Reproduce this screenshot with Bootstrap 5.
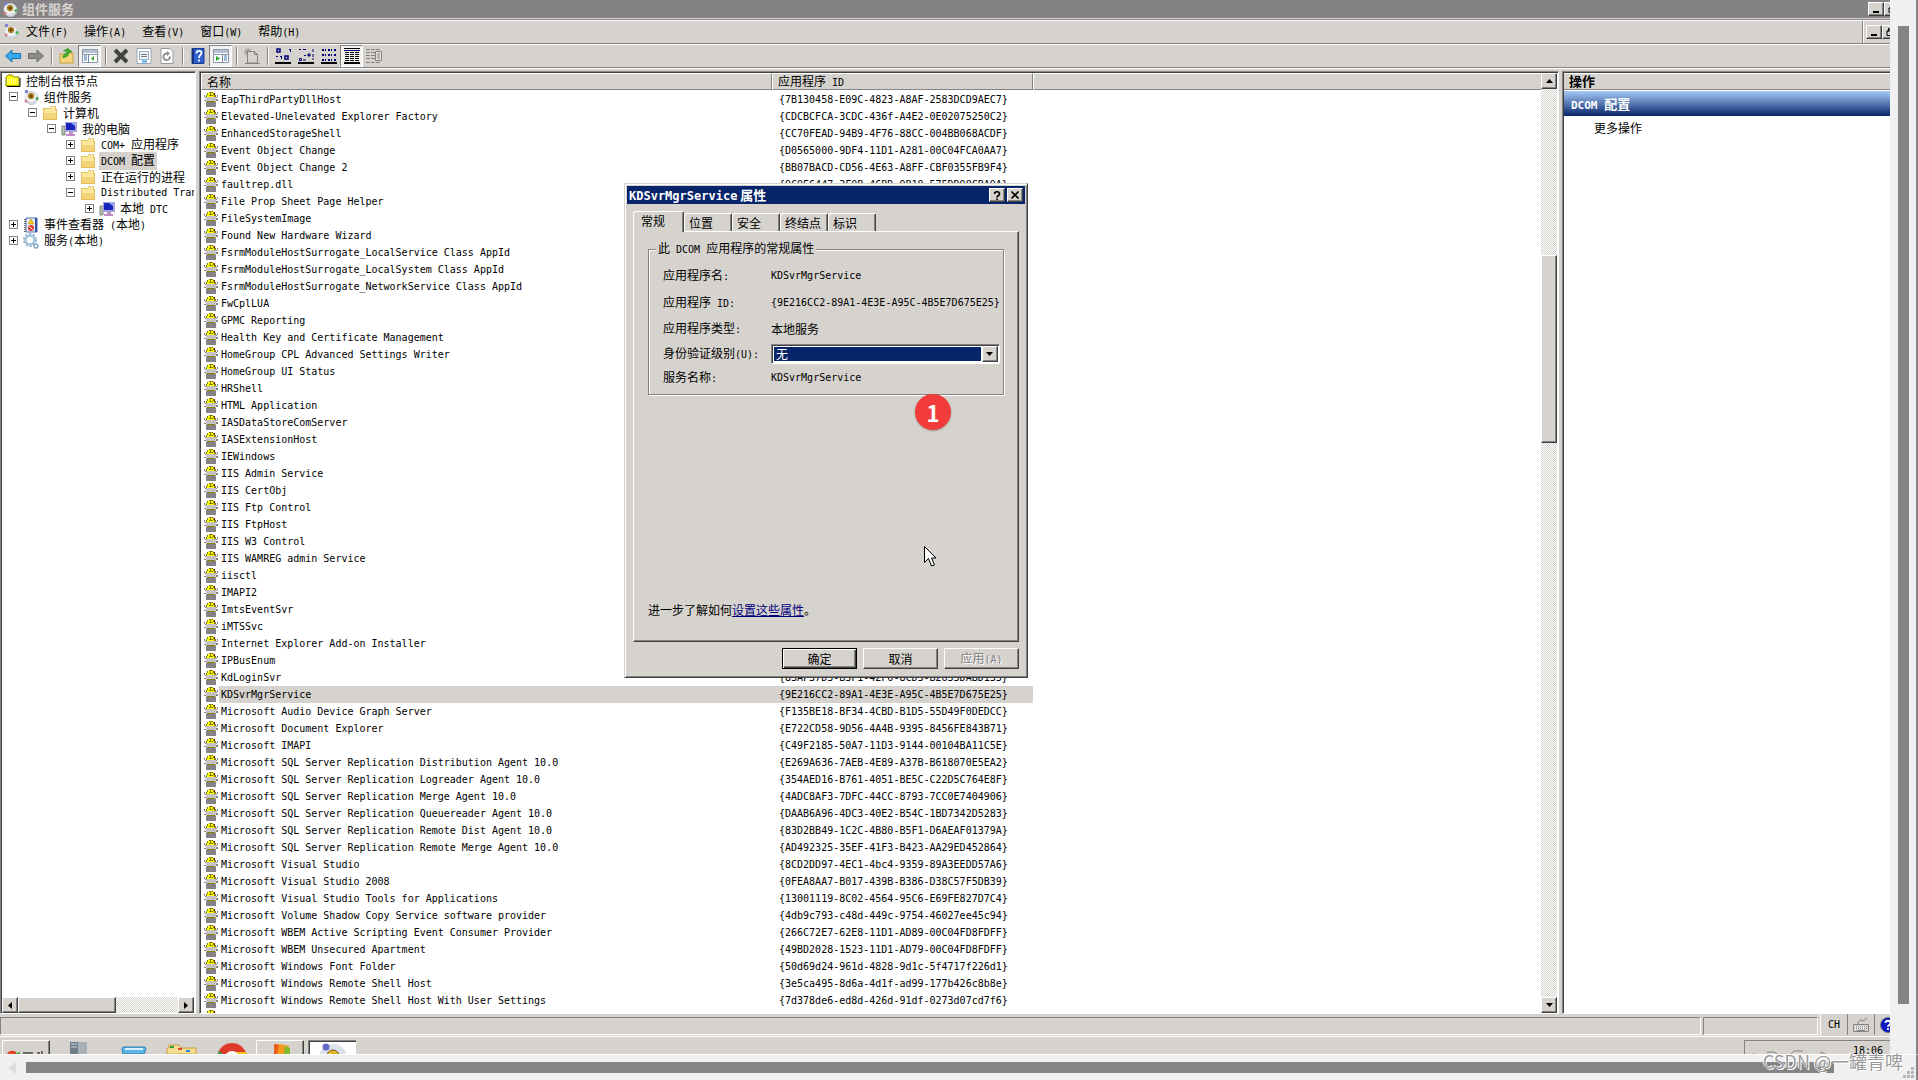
<!DOCTYPE html>
<html lang="zh-CN">
<head>
<meta charset="utf-8">
<meta name="viewport" content="width=device-width, initial-scale=1">
<title>组件服务</title>
<link href="https://cdn.jsdelivr.net/npm/bootstrap@5.3.0/dist/css/bootstrap.min.css" rel="stylesheet">
<style>
:root{--face:#d6d3ce;--shade:#848284;--dark:#424142;--navy:#08246b}
body{font:12px/16px "Noto Sans CJK SC",sans-serif;color:#000;background:var(--face);overflow:hidden}
button,select{font:inherit;color:inherit;padding:0;border-radius:0}
.en{font-family:"DejaVu Sans Mono",monospace;font-size:10px}
.screen{height:100vh}
.face{background:var(--face)}
.raised{background:var(--face);border:1px solid;border-color:#fff var(--dark) var(--dark) #fff;box-shadow:inset -1px -1px var(--shade)}
.dither{background:repeating-conic-gradient(#fff 0 25%,var(--face) 0 50%) 0 0/2px 2px}
.mini{width:16px;height:14px;display:flex;align-items:center;justify-content:center}
svg{display:block;flex:none}
/* window chrome */
.caption-bar{height:18px;background:var(--shade);color:var(--face);font-weight:700;font-size:13px;line-height:18px;padding-left:2px}
.menu-row{height:26px;border-top:1px solid var(--face);border-bottom:1px solid var(--shade);box-shadow:inset 0 1px var(--shade),inset 0 2px #fff;padding-left:3px}
.menu-row a{color:#000;text-decoration:none}
.menu-links{gap:16px;padding-left:7px;padding-top:2px}
.mdi{width:28px;border-left:1px solid var(--shade);box-shadow:inset 1px 0 #fff;margin-top:2px;padding:4px 0 0 3px;overflow:hidden}
.tool-row{height:25px;border-top:1px solid #fff;border-bottom:1px solid #fff;box-shadow:inset 0 -1px var(--shade);padding:0 0 1px 1px}
.tool-row button{width:23px;height:22px;border:1px solid transparent;background:none;display:flex;align-items:center;justify-content:center}
.tool-row button.on{border-color:var(--shade) #fff #fff var(--shade);background:repeating-conic-gradient(#fff 0 25%,#e6e4e0 0 50%) 0 0/2px 2px}
.sep{width:8px;height:18px;background:linear-gradient(90deg,var(--shade) 1px,#fff 1px 2px,transparent 2px) 4px 0 no-repeat}
/* panes */
.panes{gap:3px;padding-top:2px}
.pane{background:#fff;border:solid;border-width:1px;border-color:var(--shade) #fff #fff var(--shade);box-shadow:inset 1px 1px var(--dark);padding:1px 1px 0 1px}
.pane-tree{width:196px}
.pane-act{width:328px;border-right:0;padding-right:0}
.tree-list{line-height:16px}
.tree-list li{display:flex;align-items:center;height:16px;gap:5px;white-space:nowrap}
.tree-list li>span{padding:0 2px;margin-left:-2px}
.tree-list .picked{background:var(--face)}
.tw{width:9px;height:9px;border:1px solid var(--shade);background:linear-gradient(#000,#000) 1px 3px/5px 1px no-repeat;flex:none}
.tw.plus{background:linear-gradient(#000,#000) 1px 3px/5px 1px no-repeat,linear-gradient(#000,#000) 3px 1px/1px 5px no-repeat}
.lr{padding-left:3px}.l0{padding-left:7px}.l1{padding-left:26px}.l2{padding-left:45px}.l3{padding-left:64px}.l4{padding-left:83px}
.hbar{height:16px}
.h-thumb{width:98px}
.sb{width:16px;height:16px;display:flex;align-items:center;justify-content:center;flex:none}
.grid-apps{width:100%;table-layout:fixed;border-collapse:separate;border-spacing:0}
.grid-apps th{height:15px;font-weight:400;line-height:13px;background:var(--face);border-bottom:1px solid var(--shade);border-top:1px solid #fff;border-right:1px solid var(--shade);border-left:1px solid #fff;padding:0 0 0 5px}
.grid-apps tbody:before{content:"";display:block;height:1px}
.grid-apps td{height:17px;padding:0;line-height:17px;white-space:nowrap}
.grid-apps td:nth-child(2){padding-left:7px}
.app-name{display:flex;align-items:center;padding-left:3px}
.app-name span{flex:1;padding-left:2px;margin-left:1px}
.chosen td:nth-child(2),.chosen .app-name span{background:var(--face)}
.act-head{height:17px;border-top:1px solid #fff;border-bottom:1px solid var(--shade);font-size:13px;font-weight:700;line-height:14px;padding-left:5px}
.act-band{height:25px;margin-top:1px;background:linear-gradient(#a5cbf7,var(--navy));color:#fff;font-weight:700;font-size:13px;line-height:25px;padding-left:7px}
.act-band .en{font-size:11px}
.act-item{padding:4px 0 0 30px;color:#000;text-decoration:none;display:block}
/* bottom bars */
.status-row{height:22px;gap:2px}
.cell{border:1px solid;border-color:var(--shade) #fff #fff var(--shade);height:18px;margin-top:3px}
.cell-b{width:115px}
.lang{width:70px;border-left:1px solid #fff}
.lang>*{height:21px;border-right:1px solid var(--shade);display:flex;align-items:center;justify-content:center;flex:none;width:27px}
.task-row{height:18px;border-top:1px solid #fff;padding-left:2px;overflow:hidden}
.task-row button{width:48px;height:30px;margin-top:3px;flex:none;overflow:hidden;display:flex;align-items:flex-start}
.task-row .task-on{background:#fff;border:0;box-shadow:inset 1px 1px var(--shade),inset 2px 2px var(--dark)}
.tray{width:146px;border:1px solid var(--shade);border-right:0;margin-top:3px;height:30px}
.host-v{width:28px;background:#f0f0f0;border-right:2px solid #848484;padding:26px 0 50px 8px}
.host-v div,.host-h .bar{background:#848484}
.host-v div{width:11px}
.host-h{height:26px;background:#f0f0f0;border-right:2px solid #848484;padding-left:8px;border-top:1px solid #fff}
.host-h .bar{height:11px;margin:0 82px 0 10px}
.credit{right:15px;bottom:7px;font-size:18px;line-height:24px;color:#9a9a9a;text-shadow:1px 1px #fff,-1px -1px #fff}
/* dialog */
.dlg{left:624px;top:183px;width:404px;background:var(--face);border:1px solid;border-color:var(--face) var(--dark) var(--dark) var(--face);box-shadow:inset 1px 1px #fff,inset -1px -1px var(--shade);padding:2px}
.dlg-title{height:18px;background:var(--navy);color:#fff;font-weight:700;font-size:13px;padding:0 2px;gap:2px}
.dlg-title .en{font-size:12px;line-height:12px}
.dlg-body{padding:7px 6px 6px}
.tabs button{border:1px solid;border-color:#fff var(--dark) transparent #fff;border-bottom:0;border-radius:3px 2px 0 0;box-shadow:inset -1px 0 var(--shade);background:var(--face);width:48px;height:18px;text-align:left;padding-left:4px;line-height:16px}
.tabs button.now{height:21px;width:51px;padding:0 0 3px 7px;margin-bottom:-1px;position:relative}
.sheet{border:1px solid;border-color:#fff var(--dark) var(--dark) #fff;box-shadow:inset -1px -1px var(--shade);height:411px;padding:8px 14px 23px}
.box{border:1px solid var(--shade);box-shadow:inset 1px 1px #fff,1px 1px #fff;height:155px;padding:0 5px 0 14px}
.box legend{float:none;width:auto;font-size:12px;line-height:16px;margin:0 0 0 -7px;padding:0 2px;background:var(--face)}
.fields{display:grid;grid-template-columns:108px 1fr;grid-template-rows:27px 27px 25px 25px 24px;align-items:center;padding-top:4px;white-space:nowrap}
.combo{height:20px;border:1px solid;border-color:var(--shade) #fff #fff var(--shade);box-shadow:inset 1px 1px var(--dark);padding:1px;background:#fff}
.combo select{appearance:none;border:0;background:var(--navy);color:#fff;outline:1px solid #fff;outline-offset:-1px;padding-left:3px;line-height:14px}
.more a{color:#00007b}
.dlg-btns{gap:6px;padding-top:6px}
.dlg-btns button{width:75px;height:21px;line-height:17px}
.dlg-btns .def{outline:1px solid #000;outline-offset:-1px;border-color:#000;box-shadow:inset 1px 1px #fff,inset -1px -1px var(--dark),inset -2px -2px var(--shade)}
.dlg-btns :disabled{color:var(--shade);text-shadow:1px 1px #fff}
.step{left:915px;top:394px;width:36px;height:36px;background:#f23c3c;color:#fff;font:700 22px/36px "Noto Sans CJK SC",sans-serif;box-shadow:0 1px 2px #0004}
.ptr{left:924px;top:546px}
</style>
</head>
<body>
<svg width="0" height="0" class="position-absolute">
<defs>
<symbol id="com" viewBox="0 0 16 16"><circle cx="8.500" cy="9" r="6.500" fill="#d8dade" stroke="#c3c6cc"/><ellipse cx="8" cy="8" rx="6" ry="5" fill="#eef0f3"/><circle cx="8" cy="7" r="2.800" fill="#e7a812" stroke="#8a6410" stroke-width=".8"/><path d="M8 5v4M6 7h4" stroke="#3c2800"/><circle cx="3.500" cy="2.500" r="1.800" fill="#7d82d0"/><circle cx="14" cy="9.500" r="1.500" fill="#3fae49"/><circle cx="3" cy="12" r="1.500" fill="#dc7f86"/></symbol>
<symbol id="fold" viewBox="0 0 16 16"><path d="M1 3h7l1-2h5v3h1v11H1z" fill="#e5bd57"/><path d="M2 4h6l1-2h4v3h1v9H2z" fill="#fbe7a0"/><path d="M2 8h12v6H2z" fill="#f4d67d"/><path d="M11 2h2" stroke="#fff"/></symbol>
<symbol id="root" viewBox="0 0 16 16"><path d="M1 4l2-2h4l2 2h5v9H1z" fill="#ff0" stroke="#848200"/><path d="M2 6h11M2 8h11M2 10h11" stroke="#fff" stroke-dasharray="1 1"/><path d="M2 13.500h13V5" fill="none" stroke="#000"/></symbol>
<symbol id="pc" viewBox="0 0 16 16"><path d="M1 5h3v9H1z" fill="#b9c4b0" stroke="#7d8a78"/><path d="M4 1h12v10H4z" fill="#a9a2dd"/><path d="M5 2h9v7H5z" fill="#1824bb"/><path d="M10 2h4v3z" fill="#7fb8ff"/><path d="M8 11h4v2h2v2H5v-2h3z" fill="#bd8cc4"/></symbol>
<symbol id="evt" viewBox="0 0 16 16"><path d="M3 1h11v14H3z" fill="#e8edf8" stroke="#5472b4"/><path d="M12 1h2v14h-2z" fill="#2f54a4"/><path d="M2 2v13" stroke="#666" stroke-width="2" stroke-dasharray="1 1"/><path d="M8 2l3 5H5z" fill="#f7c81c" stroke="#b88b00" stroke-width=".5"/><circle cx="8" cy="11" r="3" fill="#da3d30"/><path d="M6.500 9.500l3 3" stroke="#fff"/></symbol>
<symbol id="gear" viewBox="0 0 16 16"><circle cx="7" cy="7" r="4.500" fill="none" stroke="#9fc2dc" stroke-width="2.500"/><circle cx="7" cy="7" r="6.300" fill="none" stroke="#8aaecb" stroke-width="1.500" stroke-dasharray="2 2"/><circle cx="13" cy="13" r="2" fill="none" stroke="#8aaecb" stroke-width="1.500"/></symbol>
<symbol id="app" viewBox="0 0 14 15"><path d="M2 6V3h1V1h2V0h4v1h2v2h1v3z" fill="#848200"/><path d="M3 5V3h1V1h5v2h1v2z" fill="#ff0"/><path d="M6 1h1v2h2v1H5V3h1z" fill="#848200"/><path d="M10 1h1v2h-1z" fill="#a01010"/><path d="M2 5h10v5H2z" fill="#c6c3c6"/><path d="M0 3h1v2H0zM13 3h1v2h-1zM1 5h1v1H1zM12 5h1v1h-1zM0 8h2v1H0zM12 7h2v2h-2z" fill="#848284"/><path d="M3 9h8v1H3z" fill="#848200"/><path d="M2 10h10v5H2z" fill="#848284"/></symbol>
<symbol id="min" viewBox="0 0 8 8"><path d="M1 6h6v2H1z"/></symbol>
<symbol id="rest" viewBox="0 0 8 8"><path d="M2.500 0v3M2 1h6M2.500 3H1v4.500h5V3H1" fill="none" stroke="#000"/></symbol>
<symbol id="up" viewBox="0 0 7 4"><path d="M0 4h7L3.500 0z"/></symbol>
<symbol id="arr" viewBox="0 0 16 16"><path d="M.5 8L7 2v3.500h8.500v5H7V14z"/></symbol>
<symbol id="win" viewBox="0 0 16 16"><path d="M.5 1.500h15v13H.5z" fill="#fff" stroke="#8b97a8"/><path d="M1 2h14v3H1z" fill="#b4c0cf"/><path d="M1 6.500h14" stroke="#8b97a8"/></symbol>
</defs>
</svg>
<div class="screen d-flex flex-column">
 <div class="d-flex flex-fill" style="min-height:0">
  <main class="d-flex flex-column flex-fill overflow-hidden">
   <header class="caption-bar d-flex align-items-center gap-0">
    <svg width="16" height="16"><use href="#com"/></svg><span class="flex-fill ps-1">组件服务</span>
    <button class="raised mini" aria-label="最小化"><svg width="8" height="8"><use href="#min"/></svg></button><div class="overflow-hidden" style="width:6px"><button class="raised mini" aria-label="还原"><svg width="8" height="8"><use href="#rest"/></svg></button></div>
   </header>
   <nav class="menu-row d-flex align-items-stretch">
    <svg class="mt-1" width="16" height="16"><use href="#com"/></svg>
    <div class="menu-links d-flex align-items-center flex-fill">
     <a href="#">文件<span class="en">(F)</span></a><a href="#">操作<span class="en">(A)</span></a><a href="#">查看<span class="en">(V)</span></a><a href="#">窗口<span class="en">(W)</span></a><a href="#">帮助<span class="en">(H)</span></a>
    </div>
    <div class="mdi d-flex"><button class="raised mini flex-shrink-0" aria-label="最小化子窗口"><svg width="8" height="8"><use href="#min"/></svg></button><button class="raised mini flex-shrink-0" aria-label="还原子窗口"><svg width="8" height="8"><use href="#rest"/></svg></button></div>
   </nav>
   <div class="tool-row d-flex align-items-center" role="toolbar">
    <button aria-label="后退"><svg width="16" height="16" fill="#35a8ec" stroke="#1b6fae"><use href="#arr"/></svg></button>
    <button aria-label="前进"><svg width="16" height="16" fill="#8c8c8c" stroke="#6c6c6c"><g transform="translate(16) scale(-1 1)"><use href="#arr"/></g></svg></button>
    <span class="sep"></span>
    <button aria-label="向上"><svg width="16" height="16"><path d="M1 6h5l1-1h7v10H1z" fill="#f6d77e" stroke="#c89d3b"/><path d="M4 10c0-3 1-4 4-5V3L4.500 3 9 .5 13 4l-3 0c0 4-3 5-6 6z" fill="#3db92f" stroke="#1c7c15" stroke-width=".6"/></svg></button>
    <button class="on" aria-label="显示树"><svg width="16" height="16"><use href="#win"/><path d="M2 8h3M2 10h3M2 12h3" stroke="#3f74b8"/><path d="M6.500 7v8" stroke="#7489a8"/><path d="M12 8v5L9 10.500z" fill="#2fa52f"/></svg></button>
    <span class="sep"></span>
    <button aria-label="删除"><svg width="16" height="16"><path d="M2 2l12 12M14 2L2 14" stroke="#444" stroke-width="4"/></svg></button>
    <button aria-label="属性"><svg width="16" height="16"><path d="M1 .5h14v15H1z" fill="#fff" stroke="#9aa6b6"/><path d="M3.500 3.500h9v8h-9z" fill="#eef6ff" stroke="#9ab"/><path d="M5 6.500h6M5 8.500h6" stroke="#777"/><path d="M6 13.500h5" stroke="#3aa7e8" stroke-width="2"/></svg></button>
    <button aria-label="刷新"><svg width="16" height="16"><path d="M2 .5h9l3 3v12H2z" fill="#fff" stroke="#999"/><path d="M11 8.500A3.300 3.300 0 1 1 8 5.500" fill="none" stroke="#888" stroke-width="1.800"/><path d="M8 3v5l3-2.500z" fill="#888"/></svg></button>
    <span class="sep"></span>
    <button aria-label="帮助"><svg width="16" height="16"><path d="M2 .5h12v15H2z" fill="#2d5fce" stroke="#1a3b8c"/><path d="M3 1v14" stroke="#16327a" stroke-width="2"/><path d="M6.500 5.500C6.500 2 11.500 2 11.500 5c0 2-2.500 2-2.500 5M9 11.500v2" fill="none" stroke="#fff" stroke-width="1.800"/></svg></button>
    <button class="on" aria-label="操作窗格"><svg width="16" height="16"><use href="#win"/><path d="M11 8h3M11 10h3M11 12h3" stroke="#3f74b8"/><path d="M9.500 7v8" stroke="#7489a8"/><path d="M3 8v5l4-2.500z" fill="#2fa52f"/></svg></button>
    <span class="sep"></span>
    <button aria-label="新建"><svg width="18" height="16"><path d="M4.500 15V3.500h7l3 3V15z" fill="#d6d3ce" stroke="#848284"/><path d="M11.500 3v3.500H15" fill="none" stroke="#848284"/><path d="M2 15.500h15M2 1l2 2M8 1L6 3M1 4h4M5 0v3M2 7l2-2" stroke="#848284"/></svg></button>
    <span class="sep"></span>
    <button aria-label="大图标"><svg width="16" height="16"><path d="M2 1h3v3H2zM10 8h3v3h-3z" fill="none" stroke="#00007b" stroke-width="1.500"/><path d="M14 1.500h2M15.500 1v3M1 8.500h2M6.500 8v3M5 8.500h2" stroke="#00007b"/><path d="M0 15h16" stroke="#000" stroke-width="2"/></svg></button>
    <button aria-label="小图标"><svg width="16" height="16"><path d="M1 1.500h2M5 1.500h3M15 1v3M6 7.500h2M10 7.500h2M15 6v3M5 12h3M15 10v2" stroke="#00007b"/><path d="M1.500 10.500h2v2h-2zM10 6h2v2h-2z" fill="none" stroke="#00007b"/><path d="M0 15h16" stroke="#000" stroke-width="2"/></svg></button>
    <button aria-label="列表"><svg width="16" height="16"><path d="M1 2h14M1 7h14M1 12h14" stroke="#00007b" stroke-width="2" stroke-dasharray="2 1 1 2"/><path d="M0 15h16" stroke="#000" stroke-width="2"/></svg></button>
    <button class="on" aria-label="详细信息"><svg width="16" height="16"><path d="M0 .5h16" stroke="#000"/><path d="M0 2.500h16" stroke="#00007b"/><path d="M1 4.500h14M1 6.500h14M1 8.500h14M1 10.500h14M1 12.500h14" stroke="#000" stroke-dasharray="4 1"/><path d="M0 15h16" stroke="#000" stroke-width="2"/></svg></button>
    <button aria-label="自定义"><svg width="17" height="16"><path d="M0 1.500h14M0 4.500h9M0 7.500h9M0 10.500h9M0 14.500h14" stroke="#848284" stroke-dasharray="4 1"/><path d="M9.500 3.500h6v9h-6z" fill="#e3e1dd" stroke="#848284"/><path d="M11 6h3M11 8h3M11 10h3" stroke="#848284"/></svg></button>
   </div>
   <div class="panes d-flex flex-fill" style="min-height:0">
    <aside class="pane pane-tree d-flex flex-column flex-shrink-0">
     <ul class="tree-list list-unstyled mb-0 flex-fill overflow-hidden">
      <li class="lr"><svg width="16" height="16"><use href="#root"/></svg><span>控制台根节点</span></li>
      <li class="l0"><i class="tw"></i><svg width="16" height="16"><use href="#com"/></svg><span>组件服务</span></li>
      <li class="l1"><i class="tw"></i><svg width="16" height="16"><use href="#fold"/></svg><span>计算机</span></li>
      <li class="l2"><i class="tw"></i><svg width="16" height="16"><use href="#pc"/></svg><span>我的电脑</span></li>
      <li class="l3"><i class="tw plus"></i><svg width="16" height="16"><use href="#fold"/></svg><span><span class="en">COM+ </span>应用程序</span></li>
      <li class="l3"><i class="tw plus"></i><svg width="16" height="16"><use href="#fold"/></svg><span class="picked"><span class="en">DCOM </span>配置</span></li>
      <li class="l3"><i class="tw plus"></i><svg width="16" height="16"><use href="#fold"/></svg><span>正在运行的进程</span></li>
      <li class="l3"><i class="tw"></i><svg width="16" height="16"><use href="#fold"/></svg><span class="en">Distributed Transaction</span></li>
      <li class="l4"><i class="tw plus"></i><svg width="16" height="16"><use href="#pc"/></svg><span>本地<span class="en"> DTC</span></span></li>
      <li class="l0"><i class="tw plus"></i><svg width="16" height="16"><use href="#evt"/></svg><span>事件查看器<span class="en"> (</span>本地<span class="en">)</span></span></li>
      <li class="l0"><i class="tw plus"></i><svg width="16" height="16"><use href="#gear"/></svg><span>服务<span class="en">(</span>本地<span class="en">)</span></span></li>
     </ul>
     <div class="hbar dither d-flex flex-shrink-0">
      <button class="raised sb" aria-label="向左"><svg width="4" height="7"><path d="M4 0v7L0 3.500z"/></svg></button>
      <div class="raised h-thumb"></div>
      <button class="raised sb ms-auto" aria-label="向右"><svg width="4" height="7"><path d="M0 0v7l4-3.500z"/></svg></button>
     </div>
    </aside>
    <section class="pane d-flex flex-fill overflow-hidden">
     <div class="flex-fill overflow-hidden">
      <table class="grid-apps">
       <colgroup><col style="width:571px"><col style="width:261px"><col></colgroup>
       <thead><tr><th scope="col">名称</th><th scope="col">应用程序<span class="en"> ID</span></th><th class="border-end-0"></th></tr></thead>
       <tbody id="apps" class="en"></tbody>
      </table>
     </div>
     <div class="dither d-flex flex-column flex-shrink-0">
      <button class="raised sb" aria-label="向上滚动"><svg width="7" height="4"><use href="#up"/></svg></button>
      <div style="flex:167"></div><div class="raised" style="flex:186"></div><div style="flex:556"></div>
      <button class="raised sb" aria-label="向下滚动"><svg width="7" height="4"><path d="M0 0h7L3.500 4z"/></svg></button>
     </div>
    </section>
    <aside class="pane pane-act flex-shrink-0">
     <div class="act-head face">操作</div>
     <div class="act-band"><span class="en">DCOM </span>配置</div>
     <a class="act-item" href="#">更多操作</a>
    </aside>
   </div>
   <footer class="status-row d-flex flex-shrink-0">
    <div class="cell flex-fill"></div><div class="cell cell-b"></div>
    <div class="lang d-flex overflow-hidden"><span class="en">CH</span><span><svg width="16" height="16" fill="none" stroke="#848284"><path d="M.5 7.500h15v7H.5zM2 9.500h12M2 11.500h12M4 13.500h8" /><path d="M2 9.500h12M2 11.500h12" stroke="#fff" stroke-dasharray="1 1"/><path d="M5 7V5l3-2 2 1 4-3"/></svg></span><span><svg width="16" height="21"><circle cx="8" cy="11" r="7.500" fill="#0a18c4" stroke="#777"/><path d="M5.500 9c0-3 5-3 5 0 0 2-2.500 1.500-2.500 4M8 14v2" fill="none" stroke="#fff" stroke-width="1.800"/></svg></span></div>
   </footer>
   <div class="task-row d-flex flex-shrink-0">
    <button class="raised" aria-label="开始"><svg width="44" height="14"><path d="M4 13q2-4 7-3l2 1v3H4z" fill="#dc4420"/><path d="M13 12l4-1v3h-4z" fill="#4ba53a"/><path d="M20 12h10M34 12h3M39 10v4" stroke="#000"/></svg></button>
    <svg class="ms-3" width="28" height="17"><path d="M4 5h8v12H4z" fill="#6c7c88"/><path d="M5 7h6M5 10h6" stroke="#cfd8de"/><path d="M12 5h9v12h-9z" fill="#a7b0b5"/></svg>
    <svg class="ms-4" width="32" height="17"><path d="M5 17l-1-5q0-2 2-2h20q2 0 2 2l-2 5z" fill="#5eb4e4" stroke="#2a7db4"/><path d="M7 12h18" stroke="#d4efff" stroke-width="2"/></svg>
    <svg class="ms-3" width="36" height="17"><path d="M1 17v-6h2V8h10l2 3h15v6z" fill="#f5dc93" stroke="#c99f3e"/><path d="M4 9h4v2H4z" fill="#2aa13a"/><path d="M12 11h4v2h-4z" fill="#d84b2f"/><path d="M20 13h4v2h-4z" fill="#2b83d6"/></svg>
    <svg class="ms-3" width="30" height="17"><circle cx="14" cy="21" r="15" fill="#dd3a2c"/><path d="M14 15h14l1 3H14z" fill="#f7c81c"/><circle cx="14" cy="21" r="7" fill="#fff"/><path d="M0 17l1-3 4 3z" fill="#2e9e44"/></svg>
    <button class="raised ms-2" aria-label="应用窗口"><svg width="46" height="13"><path d="M17 3q8 0 15 2v8H17z" fill="#f59a1c"/><path d="M17 3l5 1-2 9h-3z" fill="#ea5d1a"/><path d="M28 5l5 2v6h-6z" fill="#7ebc32"/></svg></button>
    <button class="task-on ms-1" aria-label="组件服务窗口"><svg width="48" height="14"><circle cx="25" cy="18" r="14" fill="#dde1ea"/><circle cx="25" cy="16" r="6" fill="#e2b72a" stroke="#705018"/><circle cx="18" cy="7" r="3.500" fill="#6469c6"/></svg></button>
    <div class="tray d-flex ms-auto"><svg width="100" height="14" fill="none" stroke="#848284"><path d="M8 13h2M22 11h7l3 2M46 13l3-3h9M75 13l2-2 3 2"/></svg><span class="en ms-2" style="padding-top:2px">18:06</span></div>
   </div>
  </main>
  <div class="host-v d-flex flex-shrink-0"><div></div></div>
 </div>
 <div class="host-h d-flex align-items-center flex-shrink-0 position-relative">
  <svg width="8" height="12"><path d="M8 0v12L0 6z" fill="#ddd"/></svg><div class="bar flex-fill"></div>
  <svg class="position-absolute end-0 bottom-0" width="14" height="14" fill="#b5b5b5"><path d="M9 1h3v3H9zM9 5h3v3H9zM5 5h3v3H5zM9 9h3v3H9zM5 9h3v3H5zM1 9h3v3H1z"/></svg>
 </div>
</div>
<div class="credit position-absolute">CSDN @一罐青啤</div>

<form class="dlg position-absolute" role="dialog" aria-labelledby="dt">
 <div class="dlg-title d-flex align-items-center"><span id="dt" class="flex-fill"><span class="en">KDSvrMgrService</span> 属性</span>
  <button type="button" class="raised mini" aria-label="帮助"><svg width="8" height="9"><path d="M1.500 3c0-3 5-3 5 0 0 2-2.500 1.500-2.500 3.500M4 7.500V9" fill="none" stroke="#000" stroke-width="1.700"/></svg></button>
  <button type="button" class="raised mini" aria-label="关闭"><svg width="8" height="8"><path d="M.5.5l7 7M7.500.5l-7 7" stroke="#000" stroke-width="1.600"/></svg></button></div>
 <div class="dlg-body">
  <div class="tabs d-flex align-items-end" role="tablist">
   <button type="button" role="tab" class="now">常规</button><button type="button" role="tab">位置</button><button type="button" role="tab">安全</button><button type="button" role="tab">终结点</button><button type="button" role="tab">标识</button>
  </div>
  <div class="sheet d-flex flex-column">
   <fieldset class="box">
    <legend>此<span class="en"> DCOM </span>应用程序的常规属性</legend>
    <div class="fields">
     <span>应用程序名<span class="en">:</span></span><span class="en">KDSvrMgrService</span>
     <span>应用程序<span class="en"> ID:</span></span><span class="en">{9E216CC2-89A1-4E3E-A95C-4B5E7D675E25}</span>
     <span>应用程序类型<span class="en">:</span></span><span>本地服务</span>
     <label for="auth">身份验证级别<span class="en">(U):</span></label>
     <div class="combo d-flex"><select id="auth" class="flex-fill"><option>无</option></select><span class="raised sb"><svg width="7" height="4"><path d="M0 0h7L3.500 4z"/></svg></span></div>
     <span>服务名称<span class="en">:</span></span><span class="en">KDSvrMgrService</span>
    </div>
   </fieldset>
   <div class="more mt-auto">进一步了解如何<a href="#">设置这些属性</a>。</div>
  </div>
  <div class="dlg-btns d-flex justify-content-end">
   <button type="button" class="raised def">确定</button><button type="button" class="raised">取消</button><button type="button" class="raised" disabled>应用<span class="en">(A)</span></button>
  </div>
 </div>
</form>
<div class="step position-absolute rounded-circle text-center">1</div>
<svg class="ptr position-absolute" width="13" height="21"><path d="M.5.5v16l4-4 3 7.500 3-1-3-7h4.500z" fill="#fff" stroke="#000"/></svg>

<script>
const apps = `EapThirdPartyDllHost|7B130458-E09C-4823-A8AF-2583DCD9AEC7
Elevated-Unelevated Explorer Factory|CDCBCFCA-3CDC-436f-A4E2-0E02075250C2
EnhancedStorageShell|CC70FEAD-94B9-4F76-88CC-004BB068ACDF
Event Object Change|D0565000-9DF4-11D1-A281-00C04FCA0AA7
Event Object Change 2|BB07BACD-CD56-4E63-A8FF-CBF0355FB9F4
faultrep.dll|9C9E6447-3F0B-46BD-9B18-575DD98CBA9A
File Prop Sheet Page Helper|
FileSystemImage|
Found New Hardware Wizard|
FsrmModuleHostSurrogate_LocalService Class AppId|
FsrmModuleHostSurrogate_LocalSystem Class AppId|
FsrmModuleHostSurrogate_NetworkService Class AppId|
FwCplLUA|
GPMC Reporting|
Health Key and Certificate Management|
HomeGroup CPL Advanced Settings Writer|
HomeGroup UI Status|
HRShell|
HTML Application|
IASDataStoreComServer|
IASExtensionHost|
IEWindows|
IIS Admin Service|
IIS CertObj|
IIS Ftp Control|
IIS FtpHost|
IIS W3 Control|
IIS WAMREG admin Service|
iisctl|
IMAPI2|
ImtsEventSvr|
iMTSSvc|
Internet Explorer Add-on Installer|
IPBusEnum|
KdLoginSvr|83AF37D3-B3F1-42F6-8CD3-B2633DABD133
KDSvrMgrService|9E216CC2-89A1-4E3E-A95C-4B5E7D675E25
Microsoft Audio Device Graph Server|F135BE18-BF34-4CBD-B1D5-55D49F0DEDCC
Microsoft Document Explorer|E722CD58-9D56-4A4B-9395-8456FE843B71
Microsoft IMAPI|C49F2185-50A7-11D3-9144-00104BA11C5E
Microsoft SQL Server Replication Distribution Agent 10.0|E269A636-7AEB-4E89-A37B-B618070E5EA2
Microsoft SQL Server Replication Logreader Agent 10.0|354AED16-B761-4051-BE5C-C22D5C764E8F
Microsoft SQL Server Replication Merge Agent 10.0|4ADC8AF3-7DFC-44CC-8793-7CC0E7404906
Microsoft SQL Server Replication Queuereader Agent 10.0|DAAB6A96-4DC3-40E2-B54C-1BD7342D5283
Microsoft SQL Server Replication Remote Dist Agent 10.0|83D2BB49-1C2C-4B80-B5F1-D6AEAF01379A
Microsoft SQL Server Replication Remote Merge Agent 10.0|AD492325-35EF-41F3-B423-AA29ED452864
Microsoft Visual Studio|8CD2DD97-4EC1-4bc4-9359-89A3EEDD57A6
Microsoft Visual Studio 2008|0FEA8AA7-B017-439B-B386-D38C57F5DB39
Microsoft Visual Studio Tools for Applications|13001119-8C02-4564-95C6-E69FE827D7C4
Microsoft Volume Shadow Copy Service software provider|4db9c793-c48d-449c-9754-46027ee45c94
Microsoft WBEM Active Scripting Event Consumer Provider|266C72E7-62E8-11D1-AD89-00C04FD8FDFF
Microsoft WBEM Unsecured Apartment|49BD2028-1523-11D1-AD79-00C04FD8FDFF
Microsoft Windows Font Folder|50d69d24-961d-4828-9d1c-5f4717f226d1
Microsoft Windows Remote Shell Host|3e5ca495-8d6a-4d1f-ad99-177b426c8b8e
Microsoft Windows Remote Shell Host With User Settings|7d378de6-ed8d-426d-91df-0273d07cd7f6
Microsoft Windows WSMan Provider Host|9dcb6f38-8aac-4b98-94eb-fe4a1387c211`.split("\n");
document.getElementById("apps").innerHTML = apps.map(line => {
  const [name, id] = line.split("|");
  return `<tr${name === "KDSvrMgrService" ? ' class="chosen"' : ""}><td><div class="app-name"><svg width="14" height="15"><use href="#app"/></svg><span>${name}</span></div></td><td>${id && "{" + id + "}"}</td><td></td></tr>`;
}).join("");
</script>
<script src="https://cdn.jsdelivr.net/npm/bootstrap@5.3.0/dist/js/bootstrap.bundle.min.js"></script>
</body>
</html>
